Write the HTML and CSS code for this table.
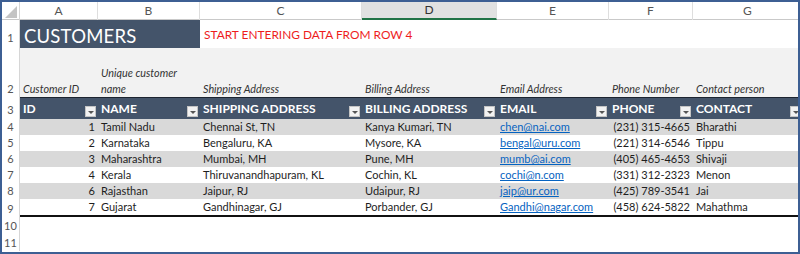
FILE: index.html
```html
<!DOCTYPE html>
<html>
<head>
<meta charset="utf-8">
<link rel="stylesheet" href="styles.css">
</head>
<body>
<div class="sheet">
  <div class="row colhdr">
    <div class="corner"><svg width="12" height="12" viewBox="0 0 12 12"><path d="M12 0 L12 12 L0 12 Z" fill="#c4c4c4"/></svg></div>
    <div class="ch">A</div>
    <div class="ch">B</div>
    <div class="ch">C</div>
    <div class="ch sel">D</div>
    <div class="ch">E</div>
    <div class="ch">F</div>
    <div class="ch">G</div>
  </div>
  <div class="row r1">
    <div class="rh">1</div>
    <div class="title">CUSTOMERS</div>
    <div class="note">START ENTERING DATA FROM ROW 4</div>
  </div>
  <div class="row r2">
    <div class="rh">2</div>
    <div class="lbl">Customer ID</div>
    <div class="lbl">Unique customer<br>name</div>
    <div class="lbl">Shipping Address</div>
    <div class="lbl">Billing Address</div>
    <div class="lbl">Email Address</div>
    <div class="lbl">Phone Number</div>
    <div class="lbl">Contact person</div>
  </div>
  <div class="row r3">
    <div class="rh">3</div>
    <div class="th"><span>ID</span><i class="fb"></i></div>
    <div class="th"><span>NAME</span><i class="fb"></i></div>
    <div class="th"><span>SHIPPING ADDRESS</span><i class="fb"></i></div>
    <div class="th"><span>BILLING ADDRESS</span><i class="fb"></i></div>
    <div class="th"><span>EMAIL</span><i class="fb"></i></div>
    <div class="th"><span>PHONE</span><i class="fb"></i></div>
    <div class="th"><span>CONTACT</span><i class="fb"></i></div>
  </div>
  <div class="row dr band">
    <div class="rh">4</div>
    <div class="num">1</div><div>Tamil Nadu</div><div>Chennai St, TN</div><div>Kanya Kumari, TN</div>
    <div><a class="mail">chen@nai.com</a></div><div class="num">(231) 315-4665</div><div>Bharathi</div>
  </div>
  <div class="row dr">
    <div class="rh">5</div>
    <div class="num">2</div><div>Karnataka</div><div>Bengaluru, KA</div><div>Mysore, KA</div>
    <div><a class="mail">bengal@uru.com</a></div><div class="num">(221) 314-6546</div><div>Tippu</div>
  </div>
  <div class="row dr band">
    <div class="rh">6</div>
    <div class="num">3</div><div>Maharashtra</div><div>Mumbai, MH</div><div>Pune, MH</div>
    <div><a class="mail">mumb@ai.com</a></div><div class="num">(405) 465-4653</div><div>Shivaji</div>
  </div>
  <div class="row dr">
    <div class="rh">7</div>
    <div class="num">4</div><div>Kerala</div><div>Thiruvanandhapuram, KL</div><div>Cochin, KL</div>
    <div><a class="mail">cochi@n.com</a></div><div class="num">(331) 312-2323</div><div>Menon</div>
  </div>
  <div class="row dr band">
    <div class="rh">8</div>
    <div class="num">6</div><div>Rajasthan</div><div>Jaipur, RJ</div><div>Udaipur, RJ</div>
    <div><a class="mail">jaip@ur.com</a></div><div class="num">(425) 789-3541</div><div>Jai</div>
  </div>
  <div class="row dr last">
    <div class="rh">9</div>
    <div class="num">7</div><div>Gujarat</div><div>Gandhinagar, GJ</div><div>Porbander, GJ</div>
    <div><a class="mail">Gandhi@nagar.com</a></div><div class="num">(458) 624-5822</div><div>Mahathma</div>
  </div>
  <div class="row er">
    <div class="rh">10</div>
  </div>
  <div class="row er">
    <div class="rh">11</div>
  </div>
</div>
</body>
</html>
```

FILE: styles.css
```css
* { box-sizing: border-box; }
html, body { margin: 0; padding: 0; background: #fff; }
body { font-family: Lato, "Liberation Sans", sans-serif; color: #1e1e1e; }

.sheet {
  width: 800px;
  height: 254px;
  border: 2px solid #3d5f93;
  overflow: hidden;
  background: #fff;
}

.row {
  display: grid;
  grid-template-columns: 18px 78px 102px 162px 135px 112px 84px 110px;
  width: 801px;
}

.rh {
  border-right: 1px solid #d6d6d6;
  color: #555;
  font-size: 11px;
  text-align: center;
  display: flex;
  align-items: flex-end;
  justify-content: center;
  background: #fff;
  line-height: 16px;
}

/* column header row */
.colhdr { height: 18px; border-bottom: 1px solid #c9c9c9; }
.corner {
  border-right: 1px solid #d6d6d6;
  display: flex;
  align-items: flex-end;
  justify-content: flex-end;
  padding: 0 2px 2px 0;
}
.ch {
  font-size: 12px;
  color: #555;
  text-align: center;
  line-height: 17px;
  border-right: 1px solid #dedede;
}
.ch.sel {
  background: #e1e1e1;
  border-bottom: 2px solid #217346;
  line-height: 16px;
  color: #333;
}

/* row 1 */
.r1 { height: 28px; }
.r1 .rh { padding-bottom: 4px; }
.title {
  grid-column: 2 / 4;
  background: #44546a;
  color: #fff;
  font-size: 18.5px;
  line-height: 28px;
  padding: 2px 0 0 4px;
  letter-spacing: 0.2px;
}
.note {
  grid-column: 4 / 9;
  color: #ee1c1c;
  font-size: 11.9px;
  line-height: 28px;
  padding: 1px 0 0 4px;
}

/* row 2 */
.r2 { height: 49px; }
.r2 .lbl {
  background: #f2f2f2;
  font-style: italic;
  font-size: 10.8px;
  color: #333;
  line-height: 16px;
  display: flex;
  align-items: flex-end;
  padding: 0 0 0 3px;
}
.r2 .rh { padding-bottom: 0; }

/* row 3 header */
.r3 {
  height: 22px;
}
.r3 .th {
  background: #44546a;
  border-top: 1px solid #1c2430;
  color: #fff;
  font-weight: bold;
  font-size: 12px;
  display: flex;
  align-items: center;
  justify-content: space-between;
  padding: 0 2px 0 3px;
}
.r3 .rh { line-height: 18px; }
.fb {
  display: block;
  width: 11px;
  height: 11px;
  background: #f2f2f2;
  border: 1px solid #c4c4c4;
  align-self: flex-end;
  margin-bottom: 2px;
  position: relative;
}
.fb::after {
  content: "";
  position: absolute;
  left: 2px;
  top: 4px;
  border-left: 3px solid transparent;
  border-right: 3px solid transparent;
  border-top: 3px solid #555;
}

/* data rows */
.dr { height: 16px; font-size: 11px; line-height: 16px; }
.dr > div:not(.rh) {
  padding-left: 3px;
  white-space: nowrap;
}
.dr.band > div:not(.rh) { background: #d9d9d9; }
.dr .num { text-align: right; padding-right: 3px; padding-left: 0; }
.dr.last { height: 18px; }
.dr.last > div:not(.rh) { border-bottom: 2px solid #111; }
.mail { color: #0563c1; text-decoration: underline; }

.er { height: 17px; }
```
